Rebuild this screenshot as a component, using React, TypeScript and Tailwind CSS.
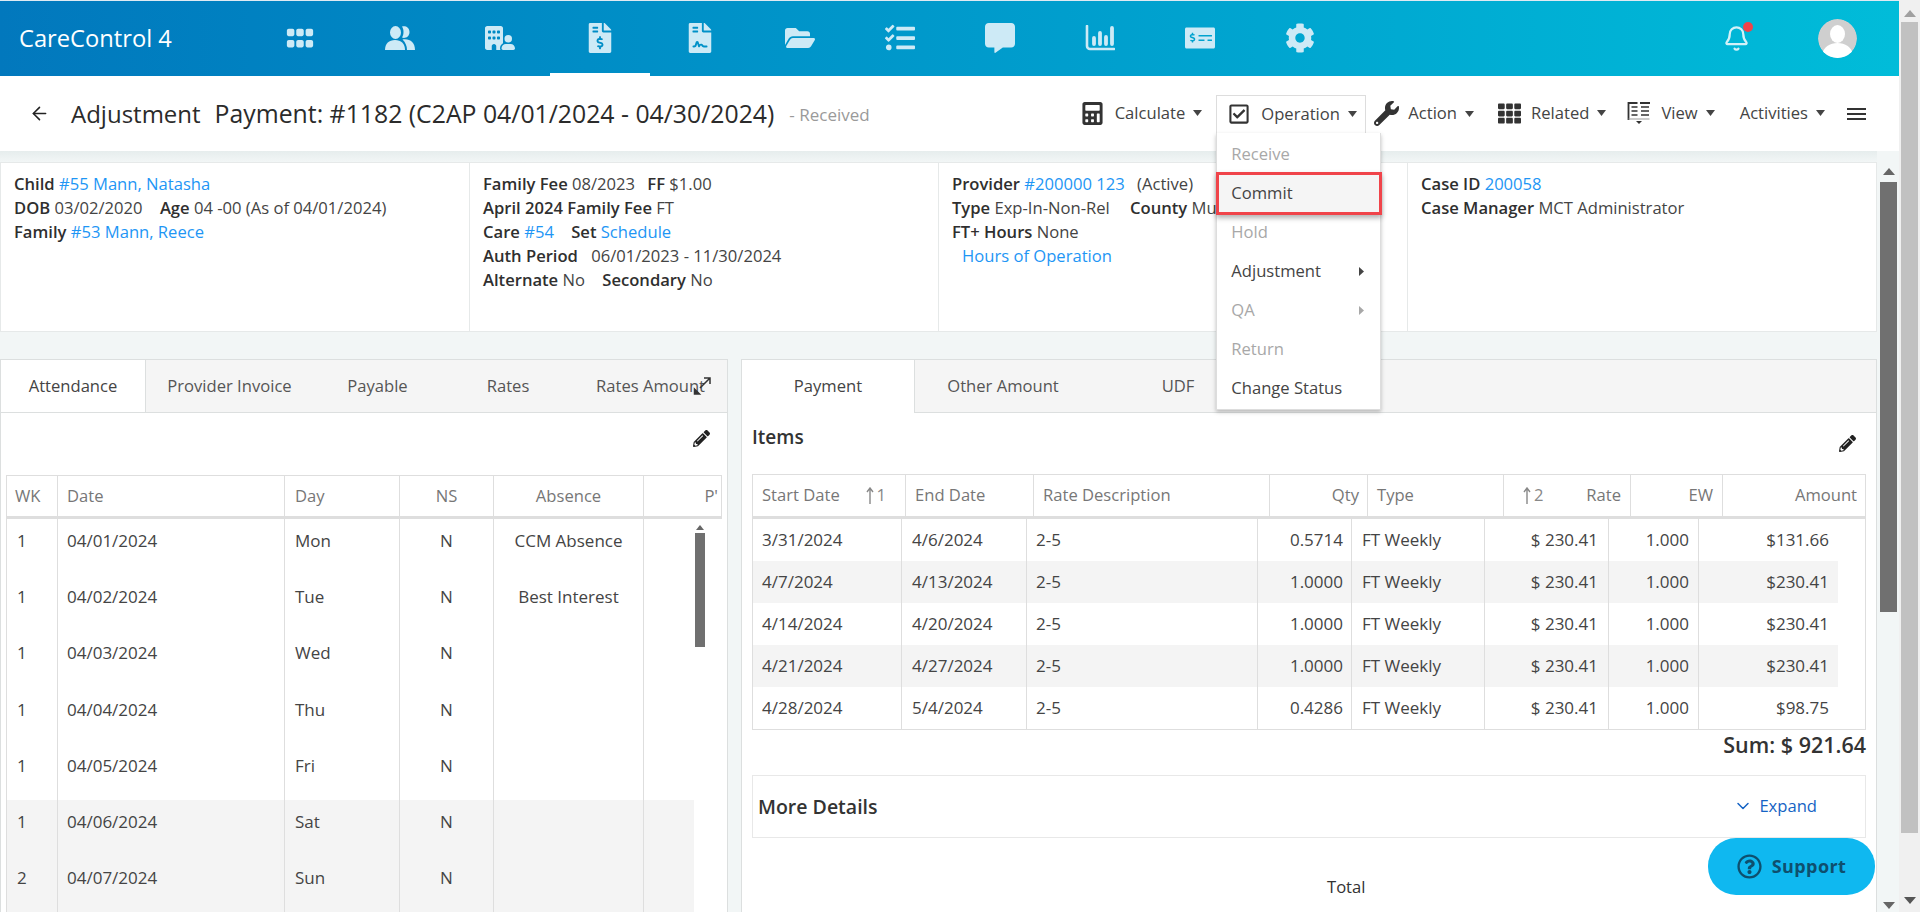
import { ArrowLeft, Bell, ChevronDown } from "lucide-react";
import {
  FaCalculator,
  FaCog,
  FaCommentAlt,
  FaFileContract,
  FaFileInvoiceDollar,
  FaFolderOpen,
  FaGripHorizontal,
  FaMoneyCheckAlt,
  FaPencilAlt,
  FaRegCheckSquare,
  FaRegQuestionCircle,
  FaTasks,
  FaTh,
  FaWrench,
} from "react-icons/fa";
import { FaBuildingUser } from "react-icons/fa6";

const navIconClass = "text-[#cdeaf6]";

function PeopleIcon() {
  return (
    <svg width="30" height="24" viewBox="0 0 30 24" fill="#cdeaf6">
      <ellipse cx="10.500" cy="6.500" rx="5.500" ry="6.500" />
      <path d="M17 .5c3-1.200 7.500.5 7.500 5.500S20 12.800 17 11.600C19 8.500 19 3.500 17 .5z" />
      <path d="M0 24c0-6.500 4-10 10-10s10 3.500 10 10z" />
      <path d="M17.500 13.500c7-1.200 12.500 2.500 12.500 10.500h-8c0-4-1.500-7.500-4.500-10.500z" />
    </svg>
  );
}

function ChartIcon() {
  return (
    <svg width="30" height="26" viewBox="0 0 30 26" fill="none" stroke="#cdeaf6" strokeLinecap="round">
      <path d="M2 1v20a3 3 0 0 0 3 3h24" strokeWidth="2.6" />
      <path d="M9 13v6M15 8v11M21 12v7M27 3v16" strokeWidth="3.8" />
    </svg>
  );
}

function ViewIcon() {
  return (
    <svg width="24" height="24" viewBox="0 0 24 24" fill="none" stroke="#333">
      <path d="M1.500 19V2h9M13 2h10" strokeWidth="1.8" />
      <path d="M4.500 6h6M4.500 10h6M4.500 14h6M14 6h8M14 10h8M14 14h8" strokeWidth="1.5" />
      <path d="M1.500 18h21" strokeWidth="1" stroke="#999" />
      <path d="M9 20h6l-3 3z" fill="#333" stroke="none" />
    </svg>
  );
}

function ExpandArrows() {
  return (
    <svg width="18" height="18" viewBox="0 0 18 18" fill="none" stroke="#333" strokeWidth="1.5">
      <path d="M7 11 17 1M11 1h6v6" />
      <path d="M1.500 12v5h5z" fill="#333" />
    </svg>
  );
}

function Avatar() {
  return (
    <svg width="39" height="39" viewBox="0 0 39 39" className="rounded-full">
      <circle cx="19.500" cy="19.500" r="19.500" fill="#cfcfcf" />
      <ellipse cx="19.500" cy="15" rx="7.500" ry="9" fill="#fff" />
      <path d="M4 36c1-8 8-12 15.500-12S34 28 35 36l-6 3H10z" fill="#fff" />
    </svg>
  );
}

function Caret({ color = "#444" }: { color?: string }) {
  return (
    <svg width="9" height="6" viewBox="0 0 9 6" className="ml-[8px] shrink-0">
      <path d="M0 0h9L4.500 6z" fill={color} />
    </svg>
  );
}

function SideCaret({ color }: { color: string }) {
  return (
    <svg width="5" height="9" viewBox="0 0 5 9">
      <path d="M0 0l5 4.500L0 9z" fill={color} />
    </svg>
  );
}

function ScrollArrow({ up, color }: { up?: boolean; color: string }) {
  return (
    <svg width="12" height="7" viewBox="0 0 12 7">
      <path d={up ? "M6 0l6 7H0z" : "M0 0h12L6 7z"} fill={color} />
    </svg>
  );
}

function SortArrow() {
  return (
    <svg width="8" height="17" viewBox="0 0 8 17" fill="none" stroke="#888" strokeWidth="1.4">
      <path d="M4 17V2M1 5l3-4 3 4" />
    </svg>
  );
}

const navItems = [
  <FaGripHorizontal size={30} className={navIconClass} />,
  <PeopleIcon />,
  <FaBuildingUser size={30} className={navIconClass} />,
  <FaFileInvoiceDollar size={30} className={navIconClass} />,
  <FaFileContract size={30} className={navIconClass} />,
  <FaFolderOpen size={30} className={navIconClass} />,
  <FaTasks size={30} className={navIconClass} />,
  <FaCommentAlt size={30} className={navIconClass} />,
  <ChartIcon />,
  <FaMoneyCheckAlt size={30} className={navIconClass} />,
  <FaCog size={30} className={navIconClass} />,
];

function TopNav() {
  return (
    <div className="flex h-[75px] items-stretch bg-gradient-to-r from-[#0278bd] to-[#01bcd9] text-white">
      <div className="flex w-[250px] items-center pl-[19px] text-[23.700px]">CareControl 4</div>
      {navItems.map((icon, i) => (
        <div
          key={i}
          className={
            i === 3
              ? "flex w-[100px] items-center justify-center border-b-[3px] border-white pt-[2px]"
              : "flex w-[100px] items-center justify-center border-b-[3px] border-transparent pt-[2px]"
          }
        >
          {icon}
        </div>
      ))}
      <div className="ml-auto flex items-center pr-[42px]">
        <div className="relative mr-[68px]">
          <Bell size={27} strokeWidth={2} className="text-[#d3f1f8]" />
          <span className="absolute -right-[3px] -top-[3px] h-[10px] w-[10px] rounded-full bg-[#f0434a]" />
        </div>
        <Avatar />
      </div>
    </div>
  );
}

function OperationMenu() {
  const rowClass = "flex h-[39px] items-center justify-between pl-[14px] pr-[16px]";
  const disabled = "text-[#a8a8a8]";
  const active = "text-[#444]";
  return (
    <div className="absolute -left-px top-[37px] z-30 w-[165px] border border-t-0 border-[#ddd] bg-white pb-[1px] pt-[2px] text-[16.600px] shadow-[0_2px_4px_rgba(0,0,0,0.25)]">
      <div className={`${rowClass} ${disabled}`}>Receive</div>
      <div className={`${rowClass} relative bg-[#f5f5f5] ${active}`}>
        Commit
        <span className="absolute -left-px -right-[2px] -top-[2px] h-[43px] border-[3px] border-[#f0444a] shadow-[0_3px_5px_rgba(0,0,0,0.3)]" />
      </div>
      <div className={`${rowClass} ${disabled}`}>Hold</div>
      <div className={`${rowClass} ${active}`}>
        Adjustment
        <SideCaret color="#444" />
      </div>
      <div className={`${rowClass} ${disabled}`}>
        QA
        <SideCaret color="#a8a8a8" />
      </div>
      <div className={`${rowClass} ${disabled}`}>Return</div>
      <div className={`${rowClass} ${active}`}>Change Status</div>
    </div>
  );
}

function Toolbar() {
  return (
    <div className="relative z-20 flex h-[75px] items-center bg-white pl-[29px] text-[16.600px] text-[#444]">
      <ArrowLeft size={21} strokeWidth={1.8} className="text-[#222]" />
      <div className="ml-[21px] flex items-baseline font-medium text-[#2b2b2b]">
        <span className="text-[24px]">Adjustment</span>
        <span className="ml-[14px] text-[24.800px]">Payment: #1182 (C2AP 04/01/2024 - 04/30/2024)</span>
        <span className="ml-[15px] -translate-y-[2px] text-[17px] font-normal text-[#9a9a9a]">- Received</span>
      </div>
      <div className="ml-auto flex items-center pr-[33px]">
        <div className="flex items-center">
          <FaCalculator size={23} className="mr-[11px] text-[#333]" />
          <span>Calculate</span>
          <Caret />
        </div>
        <div className="relative ml-[14px] flex h-[38px] w-[150px] items-center border border-b-0 border-[#ddd] pl-[11px]">
          <FaRegCheckSquare size={22} className="mr-[11px] text-[#333]" />
          <span>Operation</span>
          <Caret />
          <OperationMenu />
        </div>
        <div className="ml-[8px] flex items-center">
          <FaWrench size={25} className="mr-[9px] text-[#333]" />
          <span>Action</span>
          <Caret />
        </div>
        <div className="ml-[24px] flex items-center">
          <FaTh size={23} className="mr-[10px] text-[#333]" />
          <span>Related</span>
          <Caret />
        </div>
        <div className="ml-[21px] flex items-center">
          <span className="mr-[10px]">
            <ViewIcon />
          </span>
          <span>View</span>
          <Caret />
        </div>
        <div className="ml-[25px] flex items-center">
          <span>Activities</span>
          <Caret />
        </div>
        <div className="ml-[22px] flex w-[19px] flex-col gap-[3px]">
          <span className="h-[2px] bg-[#333]" />
          <span className="h-[2px] bg-[#333]" />
          <span className="h-[2px] bg-[#333]" />
        </div>
      </div>
    </div>
  );
}

function L({ children }: { children: React.ReactNode }) {
  return <span className="text-[#1e96f5]">{children}</span>;
}

function B({ children }: { children: React.ReactNode }) {
  return <b className="font-semibold text-[#2f2f2f]">{children}</b>;
}

function InfoPanel() {
  const cell = "border-r border-[#e6e9e9] pl-[13px] pt-[9px] text-[16.600px] leading-[24px] text-[#444]";
  return (
    <div className="grid h-[170px] grid-cols-[469px_469px_469px_470px] border border-[#e6e9e9] bg-white">
      <div className={cell}>
        <div>
          <B>Child</B> <L>#55 Mann, Natasha</L>
        </div>
        <div>
          <B>DOB</B> 03/02/2020 <span className="ml-[13px]" /> <B>Age</B> 04 -00 (As of 04/01/2024)
        </div>
        <div>
          <B>Family</B> <L>#53 Mann, Reece</L>
        </div>
      </div>
      <div className={cell}>
        <div>
          <B>Family Fee</B> 08/2023 <span className="ml-[8px]" /> <B>FF</B> $1.00
        </div>
        <div>
          <B>April 2024 Family Fee</B> FT
        </div>
        <div>
          <B>Care</B> <L>#54</L> <span className="ml-[13px]" /> <B>Set</B> <L>Schedule</L>
        </div>
        <div>
          <B>Auth Period</B> <span className="ml-[9px]" /> 06/01/2023 - 11/30/2024
        </div>
        <div>
          <B>Alternate</B> No <span className="ml-[13px]" /> <B>Secondary</B> No
        </div>
      </div>
      <div className={cell}>
        <div>
          <B>Provider</B> <L>#200000 123</L> <span className="ml-[8px]" /> (Active)
        </div>
        <div>
          <B>Type</B> Exp-In-Non-Rel <span className="ml-[16px]" /> <B>County</B> Mu
        </div>
        <div>
          <B>FT+ Hours</B> None
        </div>
        <div className="pl-[10px]">
          <L>Hours of Operation</L>
        </div>
      </div>
      <div className="pl-[13px] pt-[9px] text-[16.600px] leading-[24px] text-[#444]">
        <div>
          <B>Case ID</B> <L>200058</L>
        </div>
        <div>
          <B>Case Manager</B> MCT Administrator
        </div>
      </div>
    </div>
  );
}

const attendance = [
  ["1", "04/01/2024", "Mon", "N", "CCM Absence"],
  ["1", "04/02/2024", "Tue", "N", "Best Interest"],
  ["1", "04/03/2024", "Wed", "N", ""],
  ["1", "04/04/2024", "Thu", "N", ""],
  ["1", "04/05/2024", "Fri", "N", ""],
  ["1", "04/06/2024", "Sat", "N", ""],
  ["2", "04/07/2024", "Sun", "N", ""],
];

function AttendancePanel() {
  const colLine = "border-r border-[#dedede]";
  return (
    <div className="flex w-[728px] flex-col border border-b-0 border-[#dcdfdf] bg-white text-[16.600px] text-[#444]">
      <div className="relative flex h-[53px] shrink-0 overflow-hidden border-b border-[#dcdfdf] bg-[#f5f5f5] text-[#555]">
        <div className="-mb-px flex w-[145px] items-center justify-center border-r border-[#dcdfdf] bg-white text-[#444]">
          Attendance
        </div>
        <div className="flex w-[167px] items-center justify-center">Provider Invoice</div>
        <div className="flex w-[129px] items-center justify-center">Payable</div>
        <div className="flex w-[132px] items-center justify-center">Rates</div>
        <div className="flex flex-1 items-center whitespace-nowrap pl-[22px]">Rates Amount</div>
        <span className="absolute right-[16px] top-[17px]">
          <ExpandArrows />
        </span>
      </div>
      <div className="flex h-[62px] shrink-0 justify-end pr-[17px] pt-[17px]">
        <FaPencilAlt size={17} className="text-[#222]" />
      </div>
      <div className="relative ml-[5px] w-[716px] flex-1 overflow-hidden">
        <div className="grid h-[44px] grid-cols-[51px_227px_115px_94px_150px_79px] border-x border-t border-b-[3px] border-[#dedede] text-[#777]">
          <div className={`${colLine} flex items-center pl-[8px]`}>WK</div>
          <div className={`${colLine} flex items-center pl-[9px]`}>Date</div>
          <div className={`${colLine} flex items-center pl-[10px]`}>Day</div>
          <div className={`${colLine} flex items-center justify-center`}>NS</div>
          <div className={`${colLine} flex items-center justify-center`}>Absence</div>
          <div className="flex items-center justify-end pr-[5px]">P'</div>
        </div>
        {attendance.map((row, i) => (
          <div
            key={i}
            className={
              i >= 5
                ? "grid h-[56.200px] w-[688px] grid-cols-[51px_227px_115px_94px_150px_51px] border-l border-[#dedede] bg-[#f4f4f4] text-[17px] leading-[43px]"
                : "grid h-[56.200px] w-[688px] grid-cols-[51px_227px_115px_94px_150px_51px] border-l border-[#dedede] text-[17px] leading-[43px]"
            }
          >
            <div className={`${colLine} pl-[10px]`}>{row[0]}</div>
            <div className={`${colLine} pl-[9px]`}>{row[1]}</div>
            <div className={`${colLine} pl-[10px]`}>{row[2]}</div>
            <div className={`${colLine} text-center`}>{row[3]}</div>
            <div className={`${colLine} text-center`}>{row[4]}</div>
            <div />
          </div>
        ))}
        <div className="absolute left-[689px] top-[50px] flex w-[10px] flex-col items-center">
          <svg width="8" height="5" viewBox="0 0 8 5">
            <path d="M4 0l4 5H0z" fill="#666" />
          </svg>
          <div className="mt-[3px] h-[114px] w-[10px] bg-[#707070]" />
        </div>
      </div>
    </div>
  );
}

const items = [
  ["3/31/2024", "4/6/2024", "0.5714", "$131.66"],
  ["4/7/2024", "4/13/2024", "1.0000", "$230.41"],
  ["4/14/2024", "4/20/2024", "1.0000", "$230.41"],
  ["4/21/2024", "4/27/2024", "1.0000", "$230.41"],
  ["4/28/2024", "5/4/2024", "0.4286", "$98.75"],
];

function PaymentPanel() {
  const head = "flex items-center border-r border-[#dedede]";
  const cell = "flex items-center border-r border-[#dedede]";
  return (
    <div className="flex w-[1136px] flex-col border border-b-0 border-[#dcdfdf] bg-white text-[16.600px] text-[#444]">
      <div className="flex h-[53px] shrink-0 border-b border-[#dcdfdf] bg-[#f5f5f5] text-[#555]">
        <div className="-mb-px flex w-[173px] items-center justify-center border-r border-[#dcdfdf] bg-white text-[#444]">
          Payment
        </div>
        <div className="flex w-[176px] items-center justify-center">Other Amount</div>
        <div className="flex w-[174px] items-center justify-center">UDF</div>
      </div>
      <div className="flex flex-1 flex-col overflow-hidden px-[10px]">
        <div className="flex h-[61px] shrink-0 justify-between">
          <span className="pt-[10px] text-[19px] font-semibold text-[#333]">Items</span>
          <span className="pr-[10px] pt-[22px]">
            <FaPencilAlt size={17} className="text-[#222]" />
          </span>
        </div>
        <div className="w-[1114px] border border-[#dedede]">
          <div className="grid h-[44px] grid-cols-[153px_128px_236px_98px_136px_127px_92px_142px] border-b-[3px] border-[#dedede] text-[#777]">
            <div className={`${head} justify-between pl-[9px] pr-[19px]`}>
              Start Date
              <span className="flex items-center gap-[3px] text-[#888]">
                <SortArrow />1
              </span>
            </div>
            <div className={`${head} pl-[9px]`}>End Date</div>
            <div className={`${head} pl-[9px]`}>Rate Description</div>
            <div className={`${head} justify-end pr-[8px]`}>Qty</div>
            <div className={`${head} pl-[9px]`}>Type</div>
            <div className={`${head} justify-between pl-[19px] pr-[9px]`}>
              <span className="flex items-center gap-[3px] text-[#888]">
                <SortArrow />2
              </span>
              Rate
            </div>
            <div className={`${head} justify-end pr-[9px]`}>EW</div>
            <div className="flex items-center justify-end pr-[8px]">Amount</div>
          </div>
          {items.map((row, i) => (
            <div
              key={i}
              className={
                i % 2 === 1
                  ? "grid h-[42px] w-[1085px] grid-cols-[149px_125px_231px_94px_133px_124px_90px_139px] bg-[#f4f4f4] text-[17px]"
                  : "grid h-[42px] w-[1085px] grid-cols-[149px_125px_231px_94px_133px_124px_90px_139px] text-[17px]"
              }
            >
              <div className={`${cell} pl-[9px]`}>{row[0]}</div>
              <div className={`${cell} pl-[10px]`}>{row[1]}</div>
              <div className={`${cell} pl-[9px]`}>2-5</div>
              <div className={`${cell} justify-end pr-[8px]`}>{row[2]}</div>
              <div className={`${cell} pl-[10px]`}>FT Weekly</div>
              <div className={`${cell} justify-end pr-[10px]`}>$ 230.41</div>
              <div className={`${cell} justify-end pr-[9px]`}>1.000</div>
              <div className="flex items-center justify-end pr-[9px]">{row[3]}</div>
            </div>
          ))}
        </div>
        <div className="w-[1114px] text-right text-[21.500px] font-semibold leading-[30px] text-[#333]">
          Sum: $ 921.64
        </div>
        <div className="mt-[15px] flex h-[63px] w-[1114px] shrink-0 items-center justify-between border border-[#e8e8e8] pl-[5px] pr-[48px]">
          <span className="text-[19.500px] font-semibold text-[#333]">More Details</span>
          <span className="flex items-center gap-[6px] text-[#1563c4]">
            <ChevronDown size={20} strokeWidth={1.8} />
            Expand
          </span>
        </div>
        <div className="ml-[575px] mt-[37px] font-medium leading-[24px] text-[#333]">Total</div>
      </div>
    </div>
  );
}

function InnerScrollbar() {
  return (
    <div className="flex w-[22px] shrink-0 flex-col items-center pl-[1px] pt-[17px]">
      <ScrollArrow up color="#666" />
      <div className="mt-[7px] h-[430px] w-[17px] bg-[#707070]" />
      <div className="mt-auto pb-[3px]">
        <ScrollArrow color="#666" />
      </div>
    </div>
  );
}

function PageScrollbar() {
  return (
    <div className="flex w-[21px] shrink-0 flex-col items-center bg-[#f0f0f0] pt-[10px]">
      <ScrollArrow up color="#a0a0a0" />
      <div className="mt-[5px] h-[811px] w-[17px] bg-[#c1c1c1]" />
      <div className="mt-auto pb-[8px]">
        <ScrollArrow color="#555" />
      </div>
    </div>
  );
}

export default function App() {
  return (
    <div className="relative flex h-[912px] w-[1920px] overflow-hidden bg-[#f2f6f6] font-['Open_Sans',sans-serif]">
      <div className="flex w-[1899px] shrink-0 flex-col">
        <div className="h-px shrink-0 bg-[#dfeaf3]" />
        <TopNav />
        <Toolbar />
        <div className="flex min-h-0 flex-1">
          <div className="flex w-[1877px] shrink-0 flex-col">
            <div className="h-[11px] shrink-0 bg-gradient-to-b from-[#e6eded] to-[#f2f6f6]" />
            <InfoPanel />
            <div className="mt-[27px] flex min-h-0 flex-1 gap-[13px]">
              <AttendancePanel />
              <PaymentPanel />
            </div>
          </div>
          <InnerScrollbar />
        </div>
      </div>
      <PageScrollbar />
      <div className="absolute left-[1708px] top-[838px] z-30 flex h-[57px] w-[167px] items-center justify-center gap-[10px] rounded-[28px] bg-[#0fb8f0] text-[18px] font-bold tracking-[0.4px] text-[#0e4f6e]">
        <FaRegQuestionCircle size={25} />
        Support
      </div>
    </div>
  );
}
